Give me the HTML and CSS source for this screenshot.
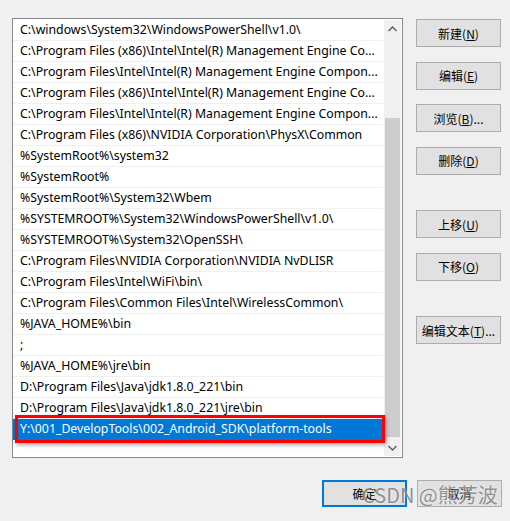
FILE: index.html
```html
<!DOCTYPE html>
<html lang="zh-CN">
<head>
    <meta charset="UTF-8">
    <title>编辑环境变量</title>
    <link rel="stylesheet" href="styles.css">
</head>
<body>
    <div class="dialog">
        <div class="main">
            <div class="listbox">
                <ul class="paths">
                    <li>C:\windows\System32\WindowsPowerShell\v1.0\</li>
                    <li>C:\Program Files (x86)\Intel\Intel(R) Management Engine Co...</li>
                    <li>C:\Program Files\Intel\Intel(R) Management Engine Compon...</li>
                    <li>C:\Program Files (x86)\Intel\Intel(R) Management Engine Co...</li>
                    <li>C:\Program Files\Intel\Intel(R) Management Engine Compon...</li>
                    <li>C:\Program Files (x86)\NVIDIA Corporation\PhysX\Common</li>
                    <li>%SystemRoot%\system32</li>
                    <li>%SystemRoot%</li>
                    <li>%SystemRoot%\System32\Wbem</li>
                    <li>%SYSTEMROOT%\System32\WindowsPowerShell\v1.0\</li>
                    <li>%SYSTEMROOT%\System32\OpenSSH\</li>
                    <li>C:\Program Files\NVIDIA Corporation\NVIDIA NvDLISR</li>
                    <li>C:\Program Files\Intel\WiFi\bin\</li>
                    <li>C:\Program Files\Common Files\Intel\WirelessCommon\</li>
                    <li>%JAVA_HOME%\bin</li>
                    <li>;</li>
                    <li>%JAVA_HOME%\jre\bin</li>
                    <li>D:\Program Files\Java\jdk1.8.0_221\bin</li>
                    <li>D:\Program Files\Java\jdk1.8.0_221\jre\bin</li>
                    <li class="selected">Y:\001_DevelopTools\002_Android_SDK\platform-tools</li>
                </ul>
                <div class="scrollbar">
                    <div class="arrow">
                        <svg width="9" height="6" viewBox="0 0 9 6"><path d="M0.5 5 L4.5 1 L8.5 5" fill="none" stroke="#606060" stroke-width="1.5"/></svg>
                    </div>
                    <div class="track">
                        <div class="thumb"></div>
                    </div>
                    <div class="arrow">
                        <svg width="9" height="6" viewBox="0 0 9 6"><path d="M0.5 1 L4.5 5 L8.5 1" fill="none" stroke="#606060" stroke-width="1.5"/></svg>
                    </div>
                </div>
            </div>
            <div class="side">
                <button class="btn">新建(<u>N</u>)</button>
                <button class="btn">编辑(<u>E</u>)</button>
                <button class="btn">浏览(<u>B</u>)...</button>
                <button class="btn">删除(<u>D</u>)</button>
                <button class="btn gap">上移(<u>U</u>)</button>
                <button class="btn">下移(<u>O</u>)</button>
                <button class="btn gap">编辑文本(<u>T</u>)...</button>
            </div>
        </div>
        <div class="footer">
            <button class="btn default">确定</button>
            <button class="btn">取消</button>
        </div>
        <div class="watermark">CSDN @熊芳波</div>
    </div>
</body>
</html>
```

FILE: styles.css
```css
* {
    box-sizing: border-box;
}

body {
    margin: 0;
    background-color: #f0f0f0;
    font-family: "Noto Sans", "Noto Sans CJK SC", sans-serif;
    font-size: 12px;
    color: #000;
}

.dialog {
    position: relative;
    width: 510px;
    height: 521px;
    padding: 18px 0 0 12px;
}

.main {
    display: flex;
}

/* path list */
.listbox {
    display: flex;
    width: 391px;
    height: 440px;
    background-color: #fff;
    border: 1px solid #828790;
    padding: 1px 1px 1px 0;
}

.paths {
    list-style: none;
    margin: 0;
    padding: 0;
    width: 371px;
}

.paths li {
    height: 21px;
    line-height: 20px;
    padding-left: 7px;
    border-bottom: 1px solid #f0f0f0;
    font-size: 12.3px;
    white-space: nowrap;
    overflow: hidden;
}

.paths li.selected {
    position: relative;
    overflow: visible;
    background-color: #0078d7;
    color: #fff;
    border-bottom: none;
}

.paths li.selected::after {
    content: "";
    position: absolute;
    left: 2px;
    right: -2px;
    top: -4px;
    bottom: -3px;
    border: 3px solid #f00;
    box-shadow: 1px 2px 4px rgba(0, 0, 0, 0.35);
}

.scrollbar {
    display: flex;
    flex-direction: column;
    width: 17px;
    margin-left: 1px;
    background-color: #f0f0f0;
}

.arrow {
    height: 17px;
    display: flex;
    align-items: center;
    justify-content: center;
}

.track {
    flex: 1;
    padding-top: 81px;
    padding-bottom: 2px;
}

.thumb {
    height: 100%;
    margin: 0 1px;
    background-color: #cdcdcd;
}

/* buttons */
.side {
    display: flex;
    flex-direction: column;
    gap: 14.5px;
    margin-left: 13px;
    padding-top: 1px;
}

.btn {
    width: 85px;
    height: 28px;
    padding: 0;
    background-color: #e1e1e1;
    border: 1px solid #adadad;
    font-family: "Noto Sans CJK SC", sans-serif;
    font-size: 12px;
    color: #000;
}

.side .gap {
    margin-top: 21px;
}

.footer {
    display: flex;
    justify-content: flex-end;
    gap: 10px;
    margin-top: 22px;
    padding-right: 8px;
}

.footer .btn {
    height: 27px;
}

.btn.default {
    border: 2px solid #0078d7;
}

.watermark {
    position: absolute;
    left: 362px;
    top: 480px;
    font-family: "Noto Sans CJK SC", sans-serif;
    font-size: 20px;
    color: rgba(100, 100, 100, 0.7);
    text-shadow: 0 0 2px rgba(255, 255, 255, 0.8);
    white-space: nowrap;
}
```
